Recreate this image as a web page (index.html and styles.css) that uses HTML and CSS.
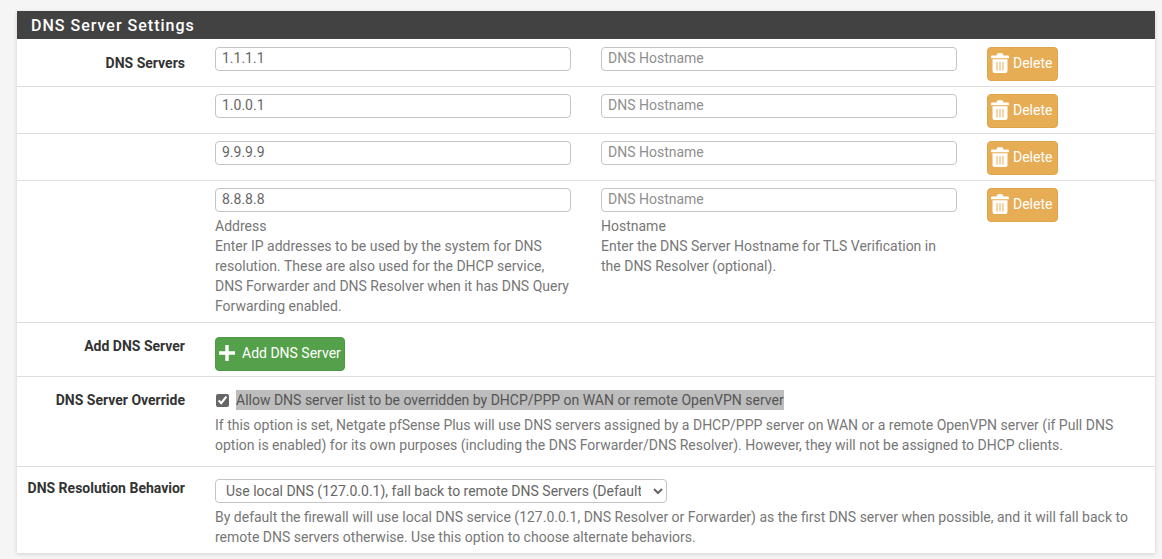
FILE: index.html
```html
<!DOCTYPE html>
<html lang="en">
<head>
<meta charset="utf-8">
<title>DNS Server Settings</title>
<link rel="stylesheet" href="styles.css">
</head>
<body>
<svg class="sprite" width="0" height="0" aria-hidden="true">
  <symbol id="trash" viewBox="0 0 18 20">
    <path fill="currentColor" fill-rule="evenodd" d="M1 2.500H5.500L6.500 .3H11.500L12.500 2.500H17Q18 2.500 18 3.500V5.200H0V3.500Q0 2.500 1 2.500ZM1.500 6.200H16.500V18Q16.500 20 14.500 20H3.500Q1.500 20 1.500 18ZM5.500 9V17.500H6.500V9ZM8.500 9V17.500H9.500V9ZM11.500 9V17.500H12.500V9Z"/>
  </symbol>
</svg>
<div class="prev-edge"></div>
<main class="panel">
  <h2 class="panel-title">DNS Server Settings</h2>

  <div class="row server-row server-first">
    <div class="label label-low">DNS Servers</div>
    <div class="cell"><input class="field" type="text" value="1.1.1.1"></div>
    <div class="cell"><input class="field" type="text" placeholder="DNS Hostname"></div>
    <div class="cell"><a class="btn btn-warn"><svg class="trash"><use href="#trash"/></svg>Delete</a></div>
  </div>

  <div class="row server-row">
    <div class="label"></div>
    <div class="cell"><input class="field" type="text" value="1.0.0.1"></div>
    <div class="cell"><input class="field" type="text" placeholder="DNS Hostname"></div>
    <div class="cell"><a class="btn btn-warn"><svg class="trash"><use href="#trash"/></svg>Delete</a></div>
  </div>

  <div class="row server-row">
    <div class="label"></div>
    <div class="cell"><input class="field" type="text" value="9.9.9.9"></div>
    <div class="cell"><input class="field" type="text" placeholder="DNS Hostname"></div>
    <div class="cell"><a class="btn btn-warn"><svg class="trash"><use href="#trash"/></svg>Delete</a></div>
  </div>

  <div class="row server-row server-last">
    <div class="label"></div>
    <div class="cell">
      <input class="field" type="text" value="8.8.8.8">
      <p class="help help-first">Address<br>Enter IP addresses to be used by the system for DNS resolution. These are also used for the DHCP service, DNS Forwarder and DNS Resolver when it has DNS Query Forwarding enabled.</p>
    </div>
    <div class="cell">
      <input class="field" type="text" placeholder="DNS Hostname">
      <p class="help help-first">Hostname<br>Enter the DNS Server Hostname for TLS Verification in the DNS Resolver (optional).</p>
    </div>
    <div class="cell"><a class="btn btn-warn"><svg class="trash"><use href="#trash"/></svg>Delete</a></div>
  </div>

  <div class="row add-row">
    <div class="label">Add DNS Server</div>
    <div class="cell wide"><a class="btn btn-add"><svg class="plus" viewBox="0 0 16 16"><path fill="currentColor" d="M6.300 0H9.700V6.300H16V9.700H9.700V16H6.300V9.700H0V6.300H6.300Z"/></svg>Add DNS Server</a></div>
  </div>

  <div class="row override-row">
    <div class="label">DNS Server Override</div>
    <div class="cell wide">
      <label class="check"><input type="checkbox" checked><span class="selected">Allow DNS server list to be overridden by DHCP/PPP on WAN or remote OpenVPN server</span></label>
      <p class="help help-check">If this option is set, Netgate pfSense Plus will use DNS servers assigned by a DHCP/PPP server on WAN or a remote OpenVPN server (if Pull DNS option is enabled) for its own purposes (including the DNS Forwarder/DNS Resolver). However, they will not be assigned to DHCP clients.</p>
    </div>
  </div>

  <div class="row resolve-row">
    <div class="label">DNS Resolution Behavior</div>
    <div class="cell wide">
      <select class="picker"><option>Use local DNS (127.0.0.1), fall back to remote DNS Servers (Default)</option></select>
      <p class="help help-select">By default the firewall will use local DNS service (127.0.0.1, DNS Resolver or Forwarder) as the first DNS server when possible, and it will fall back to remote DNS servers otherwise. Use this option to choose alternate behaviors.</p>
    </div>
  </div>
</main>
</body>
</html>
```
FILE: styles.css
```css
* { box-sizing: border-box; }
html, body { height: 100%; }
body {
  margin: 0;
  padding: 0 7px 0 17px;
  background: #f5f5f5;
  font-family: Roboto, "Liberation Sans", sans-serif;
  font-size: 14px;
  line-height: 20px;
  color: #777;
  overflow: hidden;
}
.sprite { position: absolute; }
.prev-edge {
  height: 0;
  margin-bottom: 11px;
  box-shadow: 0 1px 4px rgba(0, 0, 0, .16);
}
.panel {
  background: #fff;
  box-shadow: 0 1px 4px rgba(0, 0, 0, .16);
}
.panel-title {
  margin: 0;
  height: 28px;
  padding: 5px 14px 0;
  background: #424242;
  color: #fff;
  font-size: 16px;
  font-weight: 500;
  line-height: 20px;
  letter-spacing: 1px;
}
.row {
  display: grid;
  grid-template-columns: 183px 386px 386px 1fr;
  border-bottom: 1px solid #dedede;
}
.row:last-child { border-bottom: 0; }
.server-row { height: 47px; padding-top: 7px; }
.server-first { height: 48px; padding-top: 8px; }
.server-last { height: 142px; }
.add-row { height: 54px; padding-top: 14px; }
.override-row { height: 90px; padding-top: 13px; }
.resolve-row { height: 86px; padding-top: 12px; }
.label {
  padding-right: 15px;
  text-align: right;
  font-size: 14px;
  font-weight: 700;
  color: #333;
  line-height: 20px;
}
.add-row .label, .resolve-row .label { margin-top: -1px; }
.label-low { padding-top: 6px; }
.cell { padding: 0 15px; }
.wide { grid-column: 2 / -1; }
.field {
  display: block;
  width: 100%;
  height: 24px;
  padding: 0 6px 2px 6px;
  border: 1px solid #c4c4c4;
  border-radius: 4px;
  background: #fff;
  font: 14px/20px Roboto, sans-serif;
  color: #666;
}
.field::placeholder { color: #8f8f8f; opacity: 1; }
.help { margin: 0; color: #777; font-size: 14px; line-height: 20px; }
.help-first { margin-top: 4px; }
.help-check { margin-top: 5px; padding-right: 5px; }
.help-select { margin-top: 4px; padding-right: 5px; }
.btn {
  display: inline-flex;
  align-items: center;
  height: 34px;
  padding-bottom: 2px;
  border-radius: 4px;
  color: #fff;
  font-size: 14px;
  white-space: nowrap;
}
.btn-warn { width: 71px; padding-left: 3px; background: #e6ad55; border: 1px solid #dfa54c; }
.btn-add { width: 130px; padding-left: 3px; background: #55a04a; border: 1px solid #4f9945; }
.trash { width: 18px; height: 20px; margin-right: 4px; }
.plus { width: 16px; height: 16px; margin-right: 7px; }
.check { display: flex; align-items: center; height: 20px; }
.check input {
  width: 13px;
  height: 13px;
  margin: 0 7px 0 1px;
  accent-color: #666;
}
.selected { background: #bdbdbd; color: #555; }
.picker {
  display: block;
  width: 452px;
  height: 24px;
  padding: 0 9px 0 6px;
  border: 1px solid #c4c4c4;
  border-radius: 4px;
  background: #fff;
  font: 14px Roboto, sans-serif;
  color: #666;
}
```
